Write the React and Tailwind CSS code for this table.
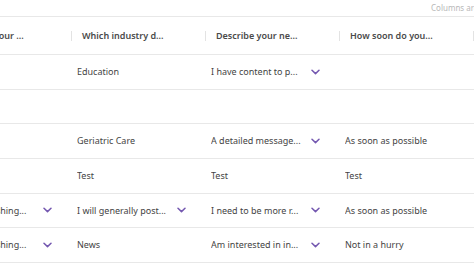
import React from "react";

const Chevron = () => (
  <svg width="9" height="6" viewBox="0 0 9 6" className="shrink-0">
    <path d="M1 1.2 L4.5 4.6 L8 1.2" fill="none" stroke="#7458b0" strokeWidth="1.5" strokeLinecap="round" strokeLinejoin="round" />
  </svg>
);

const headers = ["What does your ...", "Which industry d...", "Describe your ne...", "How soon do you...", "Anything else..."];

const rows = [
  [null, "Education", ["I have content to p...", true], null, null],
  [null, null, null, null, null],
  [null, "Geriatric Care", ["A detailed message...", true], "As soon as possible", null],
  [null, "Test", "Test", "Test", null],
  [["We are publishing...", true], ["I will generally post...", true], ["I need to be more r...", true], "As soon as possible", null],
  [["We are publishing...", true], "News", ["Am interested in in...", true], "Not in a hurry", null],
];

function Cell({ v }) {
  let text = v;
  let chev = false;
  if (Array.isArray(v)) {
    text = v[0];
    chev = v[1];
  }
  return (
    <div className="w-[134px] shrink-0 flex items-center pl-[6px]">
      <span className="w-[100px] shrink-0 whitespace-nowrap overflow-hidden">{text}</span>
      {chev && <Chevron />}
    </div>
  );
}

export default function App() {
  return (
    <div
      className="w-[474px] h-[278px] overflow-hidden bg-white relative text-[#444444]"
      style={{ fontFamily: '"Noto Sans", "Open Sans", sans-serif' }}
    >
      <div className="h-[17px] border-b border-[#e8e8e8] flex items-center pl-[431px]">
        <span className="text-[8px] text-[#b8b8b8] whitespace-nowrap leading-none">Columns are editable</span>
      </div>
      <div className="ml-[-66px]">
        <div className="h-[38px] flex border-b border-[#e8e8e8] text-[9px] font-semibold text-[#4a4a4a]">
          {headers.map((h, i) => (
            <div key={i} className={`${i === 0 ? "w-[137px]" : "w-[134px]"} shrink-0 flex items-center`}>
              <span className="w-px h-[10px] bg-[#e3e3e3] shrink-0" />
              <span className="ml-[10px] whitespace-nowrap">{h}</span>
            </div>
          ))}
        </div>
        {rows.map((r, i) => (
          <div key={i} className="h-[34.67px] flex border-b border-[#e8e8e8] text-[9px]">
            <div className="w-[3px] shrink-0" />
            {r.map((c, j) => (
              <Cell key={j} v={c} />
            ))}
          </div>
        ))}
      </div>
    </div>
  );
}
